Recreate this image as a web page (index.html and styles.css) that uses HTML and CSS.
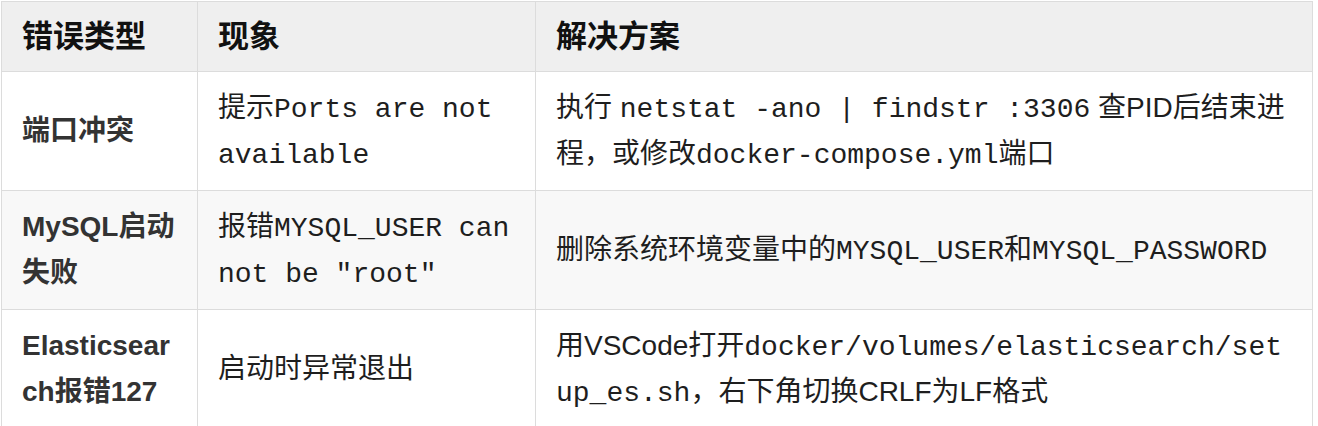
FILE: index.html
```html
<!DOCTYPE html>
<html lang="zh-CN">
<head>
<meta charset="utf-8">
<title>错误类型</title>
<link rel="stylesheet" href="styles.css">
</head>
<body>
<div class="wrap">
<table class="grid">
  <colgroup>
    <col class="c1">
    <col class="c2">
    <col class="c3">
  </colgroup>
  <thead>
    <tr><th>错误类型</th><th>现象</th><th>解决方案</th></tr>
  </thead>
  <tbody>
    <tr>
      <td class="kind">端口冲突</td>
      <td>提示<code>Ports are not available</code></td>
      <td>执行 <code>netstat -ano | findstr :3306</code> 查PID后结束进程，或修改<code>docker-compose.yml</code>端口</td>
    </tr>
    <tr class="alt">
      <td class="kind">MySQL启动失败</td>
      <td>报错<code>MYSQL_USER can not be "root"</code></td>
      <td>删除系统环境变量中的<code>MYSQL_USER</code>和<code>MYSQL_PASSWORD</code></td>
    </tr>
    <tr>
      <td class="kind">Elasticsearch报错127</td>
      <td>启动时异常退出</td>
      <td>用VSCode打开<code>docker/volumes/elasticsearch/setup_es.sh</code>，右下角切换CRLF为LF格式</td>
    </tr>
  </tbody>
</table>
</div>
</body>
</html>
```

FILE: styles.css
```css
html, body {
  margin: 0;
  padding: 0;
  background: #ffffff;
}

.wrap {
  padding: 1px 0 0 1px;
}

.grid {
  border-collapse: collapse;
  table-layout: fixed;
  width: 1311px;
  font-family: "Liberation Sans", "Noto Sans CJK SC", sans-serif;
  font-size: 28px;
  line-height: 46px;
  color: #1e1e1e;
}

.c1 { width: 196px; }
.c2 { width: 338px; }
.c3 { width: 777px; }

.grid th,
.grid td {
  border: 1px solid #dcdcdc;
  padding: 13px 20px;
  text-align: left;
  vertical-align: middle;
  word-break: break-all;
}

.grid th {
  padding: 12px 20px 11px;
  background: #efefef;
  font-size: 31px;
  font-weight: 700;
  color: #111111;
}

.grid tr.alt td {
  background: #f8f8f8;
}

.grid td.kind {
  font-weight: 700;
  color: #333333;
}

.grid code {
  font-family: "Liberation Mono", "Noto Sans CJK SC", monospace;
  font-size: 28px;
  line-height: 1;
  color: #1e1e1e;
}
```
